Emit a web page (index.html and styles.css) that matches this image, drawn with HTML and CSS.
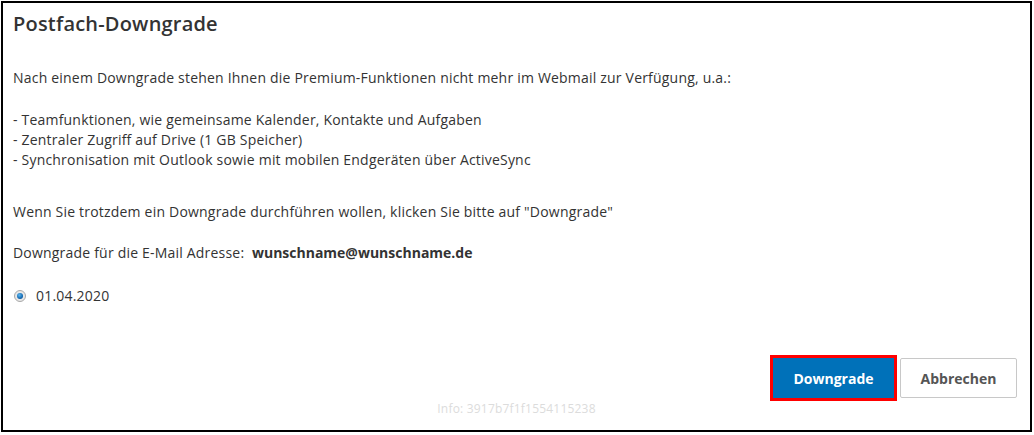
FILE: index.html
```html
<!DOCTYPE html>
<html lang="de">
<head>
<meta charset="utf-8">
<title>Postfach-Downgrade</title>
<link rel="stylesheet" href="styles.css">
</head>
<body>
<div class="frame">
  <h1 class="title">Postfach-Downgrade</h1>
  <div class="content">
    <p class="intro">Nach einem Downgrade stehen Ihnen die Premium-Funktionen nicht mehr im Webmail zur Verfügung, u.a.:</p>
    <ul class="features">
      <li>- Teamfunktionen, wie gemeinsame Kalender, Kontakte und Aufgaben</li>
      <li>- Zentraler Zugriff auf Drive (1 GB Speicher)</li>
      <li>- Synchronisation mit Outlook sowie mit mobilen Endgeräten über ActiveSync</li>
    </ul>
    <p class="hint">Wenn Sie trotzdem ein Downgrade durchführen wollen, klicken Sie bitte auf "Downgrade"</p>
    <p class="address">Downgrade für die E-Mail Adresse:&nbsp; <strong>wunschname@wunschname.de</strong></p>
    <label class="option"><span class="radio"><span class="dot"></span></span><span>01.04.2020</span></label>
  </div>
  <div class="actions">
    <button class="btn btn-primary" type="button">Downgrade</button>
    <button class="btn btn-secondary" type="button">Abbrechen</button>
  </div>
  <div class="info">Info: 3917b7f1f1554115238</div>
</div>
</body>
</html>
```
FILE: styles.css
```css
* { box-sizing: border-box; }
html, body { margin: 0; padding: 0; background: #fff; }
body {
  font-family: "Open Sans", "Noto Sans", sans-serif;
  font-size: 14px;
  line-height: 20px;
  letter-spacing: 0.2px;
  color: #333;
}
.frame {
  margin: 1px;
  width: 1031px;
  height: 431px;
  border: 2px solid #000;
  display: flex;
  flex-direction: column;
}
.title {
  margin: 0;
  padding: 7px 0 0 10px;
  font-size: 20px;
  line-height: 28px;
  font-weight: 600;
  color: #333;
}
.content {
  padding: 0 10px;
  display: flex;
  flex-direction: column;
}
.intro { margin: 30px 0 0; }
.features { list-style: none; margin: 22px 0 0; padding: 0; }
.hint { margin: 32px 0 0; }
.address { margin: 21px 0 0; }
.address strong { font-weight: 700; letter-spacing: 0; }
.option {
  margin-top: 23px;
  display: flex;
  align-items: center;
  gap: 10px;
  padding-left: 1px;
}
.radio {
  width: 12px;
  height: 12px;
  border-radius: 50%;
  border: 1px solid #a9a9a9;
  background: #e8e8e8;
  display: flex;
  align-items: center;
  justify-content: center;
}
.dot {
  width: 6px;
  height: 6px;
  border-radius: 50%;
  background: radial-gradient(circle at 40% 35%, #5db7f0, #0a5ea8 70%, #083e73);
}
.actions {
  margin-top: auto;
  display: flex;
  justify-content: flex-end;
  gap: 6px;
  padding-right: 13px;
}
.btn {
  font-family: "Open Sans", "Noto Sans", sans-serif;
  font-size: 14px;
  font-weight: 700;
  letter-spacing: 0;
  height: 40px;
  border-radius: 2px;
  cursor: pointer;
}
.btn-primary {
  width: 121px;
  background: #0071b9;
  color: #fff;
  border: 1px solid #0071b9;
  border-radius: 0;
  outline: 3px solid #f00;
  outline-offset: 0;
}
.btn-secondary {
  width: 117px;
  background: #fff;
  color: #555;
  border: 1px solid #c8c8c8;
}
.info {
  text-align: center;
  font-size: 12px;
  line-height: 16px;
  color: #dcdcdc;
  margin: 3px 0 13px;
}
```
